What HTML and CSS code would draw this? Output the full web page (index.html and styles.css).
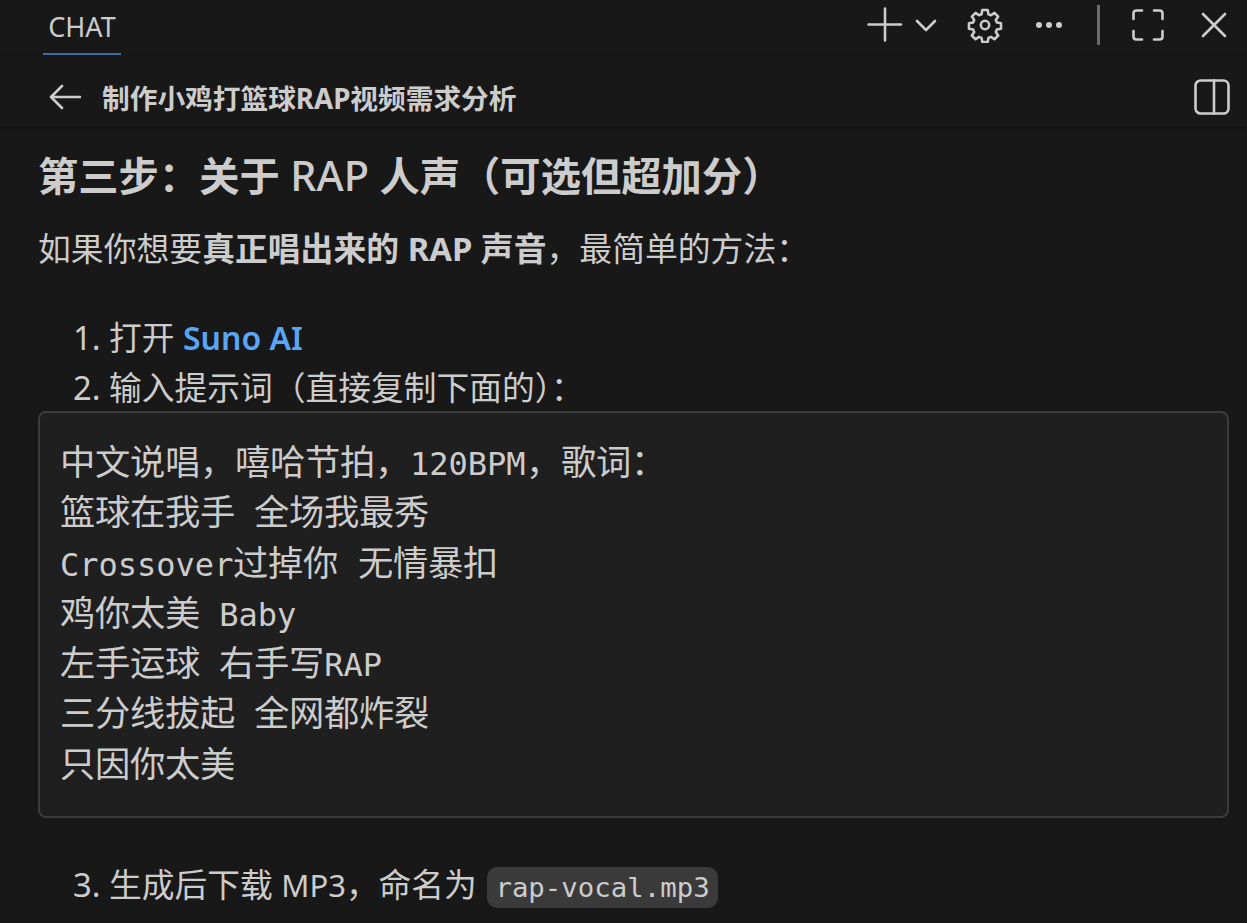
FILE: index.html
```html
<!DOCTYPE html>
<html lang="zh-CN">
<head>
    <meta charset="UTF-8">
    <meta name="viewport" content="width=device-width, initial-scale=1.0">
    <title>Chat</title>
    <link rel="stylesheet" href="styles.css">
</head>
<body>
    <div class="panel-bar">
        <div class="tab">CHAT</div>
        <div class="actions">
            <svg class="icon-plus" width="36" height="36" viewBox="0 0 36 36"><path d="M18 1.500V33.500M1.500 17.500H34"/></svg>
            <svg class="icon-chevron" width="22" height="14" viewBox="0 0 22 14"><path d="M2 3L11 12L20 3"/></svg>
            <svg class="icon-gear" width="36" height="36" viewBox="0 0 24 24"><path d="M10.200 2h3.600l.5 2.800 1.700.7 2.300-1.600 2.500 2.500-1.600 2.300.7 1.700 2.800.5v3.600l-2.800.5-.7 1.700 1.600 2.300-2.500 2.500-2.300-1.600-1.700.7-.5 2.800h-3.600l-.5-2.800-1.700-.7-2.300 1.600-2.500-2.500 1.600-2.300-.7-1.700-2.800-.5v-3.600l2.800-.5.7-1.700-1.600-2.300 2.500-2.500 2.300 1.600 1.700-.7z"/><circle cx="12" cy="12" r="2.800"/></svg>
            <svg class="icon-more" width="28" height="8" viewBox="0 0 28 8"><circle cx="4" cy="4" r="3"/><circle cx="14" cy="4" r="3"/><circle cx="24" cy="4" r="3"/></svg>
            <div class="divider"></div>
            <svg class="icon-full" width="32" height="32" viewBox="0 0 32 32"><path d="M10 1.500H4.500Q1.500 1.500 1.500 4.500V10M22 1.500H27.500Q30.500 1.500 30.500 4.500V10M1.500 22V27.500Q1.500 30.500 4.500 30.500H10M30.500 22V27.500Q30.500 30.500 27.500 30.500H22"/></svg>
            <svg class="icon-close" width="26" height="26" viewBox="0 0 26 26"><path d="M2 2L24 24M24 2L2 24"/></svg>
        </div>
    </div>
    <div class="title-bar">
        <div class="title-left">
            <svg class="icon-back" width="32" height="26" viewBox="0 0 32 26"><path d="M31 13H2M13 2L2 13L13 24"/></svg>
            <div class="title">制作小鸡打篮球RAP视频需求分析</div>
        </div>
        <svg class="icon-split" width="36" height="36" viewBox="0 0 36 36"><rect x="1.500" y="1.500" width="33" height="33" rx="5"/><path d="M20 1.500V34.500"/></svg>
    </div>
    <div class="content">
        <h3>第三步：关于 <span class="thin">RAP</span> 人声（可选但超加分）</h3>
        <p>如果你想要<strong>真正唱出来的 RAP 声音</strong>，最简单的方法：</p>
        <ol>
            <li>打开 <a href="#">Suno AI</a></li>
            <li>输入提示词（直接复制下面的）：</li>
        </ol>
        <pre class="code-block"><code>中文说唱，嘻哈节拍，<span class="latin">120BPM</span>，歌词：
篮球在我手<span class="latin"> </span>全场我最秀
<span class="latin">Crossover</span>过掉你<span class="latin"> </span>无情暴扣
鸡你太美<span class="latin"> Baby</span>
左手运球<span class="latin"> </span>右手写<span class="latin">RAP</span>
三分线拔起<span class="latin"> </span>全网都炸裂
只因你太美</code></pre>
        <ol start="3">
            <li>生成后下载 <span class="narrow">MP3</span>，命名为 <code class="inline-code">rap-vocal.mp3</code></li>
        </ol>
    </div>
</body>
</html>
```

FILE: styles.css
```css
html, body {
    margin: 0;
    height: 100%;
    overflow: hidden;
}

body {
    background-color: #181818;
    color: #cccccc;
    font-family: "Noto Sans", "Noto Sans CJK SC", sans-serif;
}

svg {
    display: block;
    fill: none;
    stroke: #cccccc;
    stroke-width: 2.600;
    stroke-linecap: round;
    stroke-linejoin: round;
}

.panel-bar {
    display: flex;
    justify-content: space-between;
    height: 56px;
    padding: 0 20px 0 43px;
}

.tab {
    width: 78px;
    height: 53px;
    border-bottom: 2px solid #3a6aa8;
    font-size: 27px;
    line-height: 53px;
    text-align: center;
}

.actions {
    display: flex;
    align-items: center;
    height: 50px;
}

.icon-plus {
    margin-right: 12px;
}

.icon-chevron {
    margin-right: 30px;
}

.icon-gear {
    stroke-width: 1.700;
}

.icon-more {
    margin-left: 32px;
}

.icon-more circle {
    fill: #cccccc;
    stroke: none;
}

.divider {
    width: 3px;
    height: 40px;
    margin: 0 32px 0 34px;
    background-color: #6b6b6b;
}

.icon-close {
    margin-left: 37px;
}

.title-bar {
    display: flex;
    align-items: center;
    justify-content: space-between;
    height: 58px;
    padding: 12px 17px 0 49px;
    border-bottom: 1px solid #111111;
    box-shadow: 0 2px 4px #121212;
}

.title-left {
    display: flex;
    align-items: center;
    gap: 21px;
}

.title {
    font-size: 27.700px;
    font-weight: 700;
}

.content {
    padding: 0 18px 0 38px;
}

h3 {
    margin: 21px 0 0;
    font-size: 40.300px;
    line-height: 56px;
    font-weight: 700;
}

.thin {
    font-size: 41.500px;
    line-height: 0;
    font-weight: 500;
}

p {
    margin: 20px 0 0;
    font-size: 32.850px;
    line-height: 50px;
}

ol {
    margin: 0;
    padding-left: 71px;
    font-size: 32.750px;
    line-height: 50px;
}

p + ol {
    margin-top: 39px;
}

a {
    color: #58a6f5;
    font-size: 32px;
    line-height: 0;
    font-weight: 600;
    text-decoration: none;
}

.code-block {
    margin: -2px 0 42px;
    padding: 25px 20px 26px;
    background-color: #1f1f1f;
    border: 2px solid #3c3c3c;
    border-radius: 8px;
    font-family: "DejaVu Sans Mono", "Noto Sans CJK SC", monospace;
    font-size: 35.300px;
    line-height: 50.300px;
}

.latin {
    font-size: 32px;
    line-height: 0;
}

.narrow {
    font-size: 31px;
    line-height: 0;
}

.inline-code {
    margin-left: 2px;
    padding: 5px 8px;
    background-color: #3a3a3a;
    border-radius: 10px;
    font-family: "DejaVu Sans Mono", monospace;
    font-size: 27.400px;
}
```
